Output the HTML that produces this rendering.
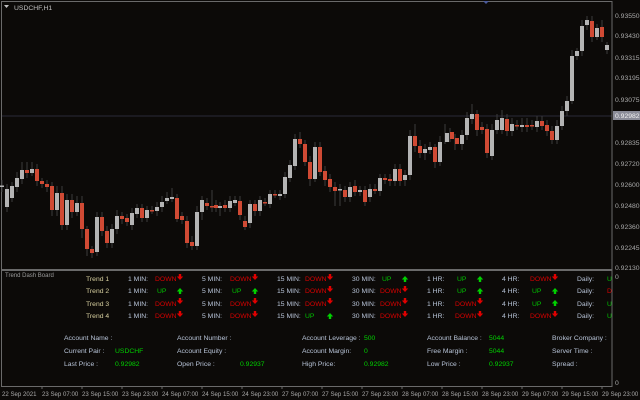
<!DOCTYPE html>
<html><head><meta charset="utf-8"><style>
body{margin:0;background:#0c0a08;width:640px;height:400px;overflow:hidden;font-family:"Liberation Sans",sans-serif;}
svg{display:block}
text{font-family:"Liberation Sans",sans-serif;font-size:6.8px}
.ax{fill:#a8a8a8}
.lb{fill:#b8c4d8}
.tr{fill:#d8d0a0}
.dn{fill:#d80000}
.up{fill:#00c000}
.g{fill:#00d000}
.tm text{font-size:6.1px}
</style></head><body>
<svg width="640" height="400" viewBox="0 0 640 400">
<rect width="640" height="400" fill="#0c0a08"/>
<rect x="1.5" y="1.5" width="610.5" height="385" fill="none" stroke="#6a6a6a"/>
<line x1="2" y1="270" x2="612" y2="270" stroke="#6a6a6a" stroke-width="2"/>
<line x1="2" y1="116" x2="612" y2="116" stroke="#2a2a38"/>
<text x="14" y="10" fill="#c0c0c0" style="font-size:6.8px">USDCHF,H1</text>
<path d="M4 5 L9 5 L6.5 8 Z" fill="#c0c0c0"/>
<path d="M483 1 L489 1 L486 4 Z" fill="#4a5a9a"/>
<g stroke="#3c3c3c">
<path d="M2 180v12M7 184v28M12 182v20M17 172v20M22 162v22M27 162v16M32 162v14M37 164v22M42 178v10M47 180v12M52 182v34M57 186v30M62 186v44M67 194v36M72 194v24M77 196v20M82 196v42M87 226v30M92 246v12M97 212v44M102 212v24M107 226v22M112 224v24M117 210v24M122 212v12M127 214v12M132 208v22M137 204v14M142 204v18M147 206v16M152 206v8M157 202v14M162 196v16M167 192v12M172 188v14M177 194v28M182 212v12M187 216v32M192 236v14M197 206v44"/>
<path d="M202 196v24M207 198v12M212 190v22M216 200v12M220 202v14M225 200v12M230 196v16M235 196v10M240 196v24M245 216v14M250 200v28M255 200v16M260 196v20M265 198v8M270 190v18M275 190v8M280 190v10M285 172v26M290 160v22M295 134v36M300 132v16M305 140v26M310 156v30M315 142v40M320 142v34M325 166v20M330 174v18M335 182v24M340 184v22M345 186v16M350 182v20M355 180v16M360 186v10M365 186v20M370 184v18M375 184v10M380 174v22M385 174v10M390 174v12M395 164v22M400 164v22M405 170v16M410 130v50M415 124v28M420 140v18M425 144v16M430 142v12M435 144v24M440 136v30M445 124v20M450 128v14M455 134v16"/>
<path d="M462 130v20M467 112v28M472 104v20M477 110v26M482 122v12M487 124v34M492 124v36M497 114v20M502 110v24M507 114v22M512 118v18M517 120v10M522 118v14M527 118v14M532 120v10M537 116v16M542 116v14M547 120v16M552 126v18M557 120v24M562 106v24M567 96v20M572 50v54M577 48v12M582 20v36M587 16v14M592 16v26M597 24v16M602 20v22M607 42v12"/>
</g>
<g fill="#b4b4b4">
<rect x="0" y="185.5" width="4" height="1.5"/><rect x="5" y="189" width="4" height="18"/><rect x="10" y="186" width="4" height="12"/><rect x="15" y="178" width="4" height="9"/><rect x="20" y="170" width="4" height="9"/><rect x="30" y="169" width="4" height="4"/><rect x="55" y="193" width="4" height="17"/><rect x="65" y="200" width="4" height="25"/><rect x="75" y="203" width="4" height="9"/><rect x="95" y="217" width="4" height="35"/><rect x="110" y="229" width="4" height="14"/><rect x="115" y="216" width="4" height="13"/><rect x="130" y="213" width="4" height="12"/><rect x="135" y="208" width="4" height="6"/><rect x="145" y="210" width="4" height="8"/><rect x="155" y="207" width="4" height="4"/><rect x="160" y="202" width="4" height="5"/><rect x="165" y="198" width="4" height="3"/><rect x="170" y="197" width="4" height="2"/><rect x="195" y="212" width="4" height="34"/>
<rect x="200" y="200" width="4" height="12"/><rect x="218" y="206" width="4" height="2"/><rect x="228" y="201" width="4" height="7"/><rect x="233" y="200" width="4" height="3"/><rect x="248" y="204" width="4" height="19"/><rect x="258" y="200" width="4" height="11"/><rect x="268" y="194" width="4" height="10"/><rect x="278" y="194" width="4" height="2"/><rect x="283" y="177" width="4" height="17"/><rect x="288" y="165" width="4" height="13"/><rect x="293" y="139" width="4" height="27"/><rect x="313" y="147" width="4" height="32"/><rect x="338" y="189" width="4" height="1.5"/><rect x="348" y="187" width="4" height="10"/><rect x="358" y="190" width="4" height="2"/><rect x="368" y="189" width="4" height="8"/><rect x="378" y="178" width="4" height="13"/><rect x="393" y="169" width="4" height="12"/><rect x="403" y="175" width="4" height="5"/><rect x="408" y="136" width="4" height="39"/><rect x="423" y="149" width="4" height="4"/><rect x="428" y="147" width="4" height="3"/><rect x="438" y="142" width="4" height="20"/><rect x="445" y="133" width="4" height="9"/>
<rect x="460" y="135" width="4" height="9"/><rect x="465" y="118" width="4" height="17"/><rect x="470" y="114" width="4" height="5"/><rect x="490" y="130" width="4" height="26"/><rect x="495" y="120" width="4" height="10"/><rect x="500" y="118" width="4" height="12"/><rect x="510" y="124" width="4" height="7"/><rect x="520" y="125" width="4" height="2"/><rect x="535" y="121" width="4" height="6"/><rect x="555" y="126" width="4" height="14"/><rect x="560" y="111" width="4" height="15"/><rect x="565" y="101" width="4" height="10"/><rect x="570" y="56" width="4" height="45"/><rect x="575" y="51" width="4" height="5"/><rect x="580" y="26" width="4" height="25"/><rect x="585" y="20" width="4" height="5"/><rect x="595" y="28" width="4" height="9"/><rect x="605" y="45" width="4" height="5"/>
</g>
<g fill="#d04a34">
<rect x="25" y="170" width="4" height="3"/><rect x="35" y="169" width="4" height="12"/><rect x="40" y="181" width="4" height="3"/><rect x="45" y="184" width="4" height="3"/><rect x="50" y="186" width="4" height="24"/><rect x="60" y="193" width="4" height="32"/><rect x="70" y="200" width="4" height="12"/><rect x="80" y="203" width="4" height="26"/><rect x="85" y="229" width="4" height="20"/><rect x="90" y="249" width="4" height="4"/><rect x="100" y="217" width="4" height="14"/><rect x="105" y="231" width="4" height="12"/><rect x="120" y="216" width="4" height="3"/><rect x="125" y="218" width="4" height="4"/><rect x="140" y="208" width="4" height="10"/><rect x="150" y="210" width="4" height="1.5"/><rect x="175" y="198" width="4" height="21"/><rect x="180" y="216" width="4" height="4"/><rect x="185" y="221" width="4" height="22"/><rect x="190" y="242" width="4" height="4"/>
<rect x="205" y="203" width="4" height="3"/><rect x="210" y="206" width="4" height="1.5"/><rect x="214" y="205" width="4" height="3"/><rect x="223" y="205" width="4" height="3"/><rect x="238" y="201" width="4" height="14"/><rect x="243" y="221" width="4" height="6"/><rect x="253" y="204" width="4" height="7"/><rect x="263" y="202" width="4" height="1.5"/><rect x="273" y="194" width="4" height="1.5"/><rect x="298" y="139" width="4" height="5"/><rect x="303" y="144" width="4" height="18"/><rect x="308" y="162" width="4" height="17"/><rect x="318" y="147" width="4" height="25"/><rect x="323" y="171" width="4" height="9"/><rect x="328" y="179" width="4" height="8"/><rect x="333" y="187" width="4" height="4"/><rect x="343" y="190" width="4" height="7"/><rect x="353" y="186" width="4" height="6"/><rect x="363" y="190" width="4" height="12"/><rect x="373" y="189" width="4" height="2"/><rect x="383" y="178" width="4" height="2"/><rect x="388" y="179" width="4" height="2"/><rect x="398" y="169" width="4" height="12"/><rect x="413" y="136" width="4" height="10"/><rect x="418" y="146" width="4" height="7"/><rect x="433" y="147" width="4" height="15"/>
<rect x="450" y="132" width="4" height="7"/><rect x="455" y="138" width="4" height="6"/><rect x="475" y="114" width="4" height="16"/><rect x="480" y="127" width="4" height="3"/><rect x="485" y="129" width="4" height="24"/><rect x="505" y="119" width="4" height="12"/><rect x="515" y="125" width="4" height="1.5"/><rect x="525" y="125" width="4" height="2"/><rect x="530" y="125" width="4" height="1.5"/><rect x="540" y="121" width="4" height="5"/><rect x="545" y="125" width="4" height="6"/><rect x="550" y="131" width="4" height="9"/><rect x="590" y="21" width="4" height="16"/><rect x="600" y="27" width="4" height="10"/>
</g>
<g class="ax">
<text x="615" y="18">0.93550</text><text x="615" y="38">0.93430</text><text x="615" y="60">0.93315</text><text x="615" y="80">0.93195</text><text x="615" y="102">0.93075</text>
<text x="615" y="145">0.92835</text><text x="615" y="166">0.92720</text><text x="615" y="187">0.92600</text><text x="615" y="208">0.92480</text><text x="615" y="229">0.92360</text><text x="615" y="250">0.92245</text><text x="615" y="270">0.92130</text>
<text x="615" y="385">0</text>
</g>
<rect x="613" y="111" width="27" height="9" fill="#8a8c98"/>
<text x="615" y="118" fill="#f0f0f0">0.92982</text>
<g class="ax tm">
<text x="2" y="396">22 Sep 2021</text><text x="42" y="396">23 Sep 07:00</text><text x="82" y="396">23 Sep 15:00</text><text x="122" y="396">23 Sep 23:00</text><text x="162" y="396">24 Sep 07:00</text><text x="202" y="396">24 Sep 15:00</text><text x="242" y="396">24 Sep 23:00</text><text x="282" y="396">27 Sep 07:00</text><text x="322" y="396">27 Sep 15:00</text><text x="362" y="396">27 Sep 23:00</text><text x="402" y="396">28 Sep 07:00</text><text x="442" y="396">28 Sep 15:00</text><text x="482" y="396">28 Sep 23:00</text><text x="522" y="396">29 Sep 07:00</text><text x="562" y="396">29 Sep 15:00</text><text x="602" y="396">29 Sep 23:00</text>
</g>
<path d="M42 386v3M82 386v3M122 386v3M162 386v3M202 386v3M242 386v3M282 386v3M322 386v3M362 386v3M402 386v3M442 386v3M482 386v3M522 386v3M562 386v3M602 386v3" stroke="#6a6a6a"/>
<text x="5" y="277" fill="#9a9a9a" style="font-size:6px">Trend Dash Board</text>
<defs>
<path id="ad" d="M-1.2 -4h2.4v2.5h2l-3.2 3.5l-3.2 -3.5h2z" fill="#e00000"/>
<path id="au" d="M-1.2 4h2.4v-2.5h2l-3.2 -3.5l-3.2 3.5h2z" fill="#00d000"/>
</defs>
<g>
<text class="tr" x="86" y="281">Trend 1</text><text class="tr" x="86" y="293">Trend 2</text><text class="tr" x="86" y="306">Trend 3</text><text class="tr" x="86" y="318">Trend 4</text>
<g class="lb">
<text x="128" y="281">1 MIN:</text><text x="128" y="293">1 MIN:</text><text x="128" y="306">1 MIN:</text><text x="128" y="318">1 MIN:</text>
<text x="202" y="281">5 MIN:</text><text x="202" y="293">5 MIN:</text><text x="202" y="306">5 MIN:</text><text x="202" y="318">5 MIN:</text>
<text x="277" y="281">15 MIN:</text><text x="277" y="293">15 MIN:</text><text x="277" y="306">15 MIN:</text><text x="277" y="318">15 MIN:</text>
<text x="352" y="281">30 MIN:</text><text x="352" y="293">30 MIN:</text><text x="352" y="306">30 MIN:</text><text x="352" y="318">30 MIN:</text>
<text x="427" y="281">1 HR:</text><text x="427" y="293">1 HR:</text><text x="427" y="306">1 HR:</text><text x="427" y="318">1 HR:</text>
<text x="502" y="281">4 HR:</text><text x="502" y="293">4 HR:</text><text x="502" y="306">4 HR:</text><text x="502" y="318">4 HR:</text>
<text x="577" y="281">Daily:</text><text x="577" y="293">Daily:</text><text x="577" y="306">Daily:</text><text x="577" y="318">Daily:</text>
</g>
<g style="font-size:6.4px">
<text class="dn" x="155" y="281">DOWN</text><text class="up" x="157" y="293">UP</text><text class="dn" x="155" y="306">DOWN</text><text class="dn" x="155" y="318">DOWN</text>
<text class="dn" x="230" y="281">DOWN</text><text class="up" x="232" y="293">UP</text><text class="dn" x="230" y="306">DOWN</text><text class="dn" x="230" y="318">DOWN</text>
<text class="dn" x="305" y="281">DOWN</text><text class="dn" x="305" y="293">DOWN</text><text class="dn" x="305" y="306">DOWN</text><text class="up" x="305" y="318">UP</text>
<text class="up" x="382" y="281">UP</text><text class="dn" x="380" y="293">DOWN</text><text class="dn" x="380" y="306">DOWN</text><text class="dn" x="380" y="318">DOWN</text>
<text class="up" x="457" y="281">UP</text><text class="up" x="457" y="293">UP</text><text class="dn" x="455" y="306">DOWN</text><text class="dn" x="455" y="318">DOWN</text>
<text class="dn" x="530" y="281">DOWN</text><text class="up" x="532" y="293">UP</text><text class="up" x="532" y="306">UP</text><text class="dn" x="530" y="318">DOWN</text>
<text class="up" x="607" y="281">UP</text><text class="dn" x="607" y="293">DO</text><text class="up" x="607" y="306">UP</text><text class="up" x="607" y="318">UP</text>
</g>
<use href="#ad" x="180" y="278"/><use href="#au" x="180" y="290"/><use href="#ad" x="180" y="302"/><use href="#ad" x="180" y="315"/>
<use href="#ad" x="255" y="278"/><use href="#au" x="255" y="290"/><use href="#ad" x="255" y="302"/><use href="#ad" x="255" y="315"/>
<use href="#ad" x="330" y="278"/><use href="#ad" x="330" y="290"/><use href="#ad" x="330" y="302"/><use href="#au" x="330" y="315"/>
<use href="#au" x="405" y="278"/><use href="#ad" x="405" y="290"/><use href="#ad" x="405" y="302"/><use href="#ad" x="405" y="315"/>
<use href="#au" x="480" y="278"/><use href="#au" x="480" y="290"/><use href="#ad" x="480" y="302"/><use href="#ad" x="480" y="315"/>
<use href="#ad" x="555" y="278"/><use href="#au" x="555" y="290"/><use href="#au" x="555" y="302"/><use href="#ad" x="555" y="315"/>
</g>
<rect x="612" y="272" width="28" height="50" fill="#0c0a08"/>
<g class="ax"><text x="615" y="279">0</text></g>
<line x1="612" y1="2" x2="612" y2="386" stroke="#6a6a6a"/>
<g class="lb">
<text x="64" y="340">Account Name :</text><text x="64" y="353">Current Pair :</text><text x="64" y="366">Last Price :</text>
<text x="177" y="340">Account Number :</text><text x="177" y="353">Account Equity :</text><text x="177" y="366">Open Price :</text>
<text x="302" y="340">Account Leverage :</text><text x="302" y="353">Account Margin:</text><text x="302" y="366">High Price:</text>
<text x="427" y="340">Account Balance :</text><text x="427" y="353">Free Margin :</text><text x="427" y="366">Low Price :</text>
<text x="552" y="340">Broker Company :</text><text x="552" y="353">Server Time :</text><text x="552" y="366">Spread :</text>
</g>
<g class="g">
<text x="115" y="353">USDCHF</text><text x="115" y="366">0.92982</text>
<text x="240" y="366">0.92937</text>
<text x="364" y="340">500</text><text x="364" y="353">0</text><text x="364" y="366">0.92982</text>
<text x="489" y="340">5044</text><text x="489" y="353">5044</text><text x="489" y="366">0.92937</text>
</g>
</svg>
</body></html>
